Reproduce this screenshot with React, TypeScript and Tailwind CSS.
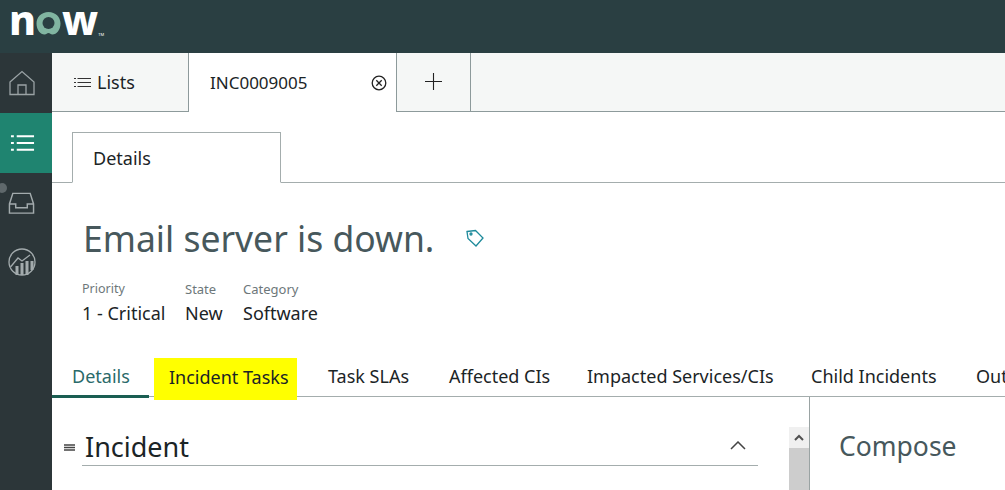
const sans = 'font-["Noto_Sans",sans-serif]';

function TopBar() {
  return (
    <header className="h-[53px] bg-[#2a3f42] flex items-start pl-[9px] shrink-0">
      <div className="flex items-center h-[46px] text-white font-extrabold text-[41px] leading-none">
        <span className="pb-[8px]">n</span>
        <svg width="27" height="25" viewBox="0 0 26 25" className="-ml-[1px]">
          <path
            d="M13 1C6 1 1 6 1 12.500 1 19 5 23.500 9 23.500c2 0 2.500-1.500 4-1.500s2 1.500 4 1.500c4 0 8-4.500 8-11C25 6 20 1 13 1z"
            fill="#81b5a1"
          />
          <circle cx="13" cy="12" r="6" fill="#2a3f42" />
        </svg>
        <span className="pb-[8px]">w</span>
        <span className="self-end mb-[9px] text-[4px] font-normal">TM</span>
      </div>
    </header>
  );
}

function Sidebar() {
  return (
    <aside className="w-[52px] shrink-0 bg-[#2c3639] relative flex flex-col">
      <div className="h-[60px] flex items-center justify-center pr-[8px]">
        <svg width="28" height="28" viewBox="0 0 28 28" fill="none" stroke="#9aa3a5" strokeWidth="1.300">
          <path d="M2 13 14 2.500 26 13v12.500H2z" />
          <path d="M10 25.500V16h8v9.500" />
        </svg>
      </div>
      <div className="h-[60px] bg-[#1f8470] flex items-center justify-center pr-[8px]">
        <svg width="25" height="20" viewBox="0 0 26 20" fill="none" stroke="#fff" strokeWidth="2">
          <path d="M1 3h3M7 3h18M1 10h3M7 10h18M1 17h3M7 17h18" />
        </svg>
      </div>
      <div className="h-[60px] flex items-center justify-center pr-[9px]">
        <svg width="27" height="24" viewBox="0 0 28 24" fill="none" stroke="#a3abad" strokeWidth="1.500" className="mt-[-1px]">
          <path d="M5 2h18l3.500 11v9.500h-25V13z" />
          <path d="M1.500 13H8v4h12v-4h6.500" />
        </svg>
      </div>
      <div className="h-[60px] flex items-center justify-center pr-[8px] -mt-[1px]">
        <svg width="28" height="28" viewBox="0 0 28 28" fill="none" stroke="#a3abad">
          <circle cx="14" cy="14" r="13" strokeWidth="1.300" />
          <path d="M2.500 19 10 10l4 3 8-6" strokeWidth="1.300" />
          <path d="M9 27v-9M14 27V15M19 27V13M24 22v-9" strokeWidth="3" />
        </svg>
      </div>
      <span className="absolute left-[-3px] top-[130px] w-[10px] h-[10px] rounded-full bg-[#5f686b]" />
    </aside>
  );
}

function TabStrip() {
  return (
    <div className="h-[59px] bg-[#f5f7f6] flex border-b border-[#8d9a9b] shrink-0 text-[#1b2426]">
      <div className="w-[137px] border-r border-[#8d9a9b] flex items-center pl-[22px] gap-[6px]">
        <svg width="17" height="11" viewBox="0 0 17 11" fill="none" stroke="#333" strokeWidth="1.200">
          <path d="M0 1.500h2M3.500 1.500H17M0 5.500h2M3.500 5.500H17M0 9.500h2M3.500 9.500H17" />
        </svg>
        <span className="text-[18px] leading-none">Lists</span>
      </div>
      <div className="w-[208px] bg-white -mb-[1px] flex items-center pl-[21px] pr-[9px] justify-between border-r border-[#8d9a9b]">
        <span className="text-[17px] leading-none">INC0009005</span>
        <svg width="16" height="16" viewBox="0 0 16 16" fill="none" stroke="#222" strokeWidth="1.300">
          <circle cx="8" cy="8" r="6.800" />
          <path d="M5.300 5.300l5.400 5.400M10.700 5.300l-5.400 5.400" />
        </svg>
      </div>
      <div className="w-[74px] border-r border-[#8d9a9b] flex items-center justify-center pb-[1px]">
        <svg width="17" height="17" viewBox="0 0 17 17" stroke="#222" strokeWidth="1.100">
          <path d="M8.500 0v17M0 8.500h17" />
        </svg>
      </div>
    </div>
  );
}

const subTabs = [
  { label: "Task SLAs", w: "w-[121px]" },
  { label: "Affected CIs", w: "w-[138px]" },
  { label: "Impacted Services/CIs", w: "w-[224px]" },
  { label: "Child Incidents", w: "w-[165px]" },
  { label: "Outages", w: "w-[80px]" },
];

export default function App() {
  return (
    <div className={`w-[1005px] h-[490px] overflow-hidden bg-white flex flex-col ${sans}`}>
      <TopBar />
      <div className="flex flex-1 min-h-0">
        <Sidebar />
        <main className="flex-1 min-w-0 flex flex-col">
          <TabStrip />
          <div className="h-[71px] pt-[20px] pl-[20px] border-b border-[#a4adad] shrink-0">
            <div className="w-[209px] h-[51px] border border-b-white border-[#a4adad] bg-white flex items-center pl-[20px] pt-[2px] text-[18px] text-[#1b2426]">
              Details
            </div>
          </div>
          <div className="flex items-center pl-[31px] pt-[30px] gap-[32px]">
            <h1 className="text-[35.500px] leading-[50px] text-[#47585c]">Email server is down.</h1>
            <svg width="18" height="18" viewBox="0 0 18 18" fill="none" stroke="#1d8a9b" strokeWidth="1.300">
              <path d="M1 2.500 9.500 1.500 17 9 10 17 2 9.500z" />
              <circle cx="5" cy="5" r="1" />
            </svg>
          </div>
          <div className="flex pl-[30px] mt-[17px]">
            <div className="w-[103px]">
              <div className="text-[12.500px] leading-[18px] text-[#6d777a]">Priority</div>
              <div className="text-[18px] leading-[24px] text-[#1b2426] mt-[3px]">1 - Critical</div>
            </div>
            <div className="w-[58px]">
              <div className="text-[13px] leading-[18px] text-[#6d777a]">State</div>
              <div className="text-[18px] leading-[24px] text-[#1b2426] mt-[3px]">New</div>
            </div>
            <div>
              <div className="text-[13px] leading-[18px] text-[#6d777a]">Category</div>
              <div className="text-[18px] leading-[24px] text-[#1b2426] mt-[3px]">Software</div>
            </div>
          </div>
          <div className="flex h-[39px] mt-[33px] border-b border-[#a4adad] shrink-0 text-[18px] text-[#1b2426] whitespace-nowrap">
            <div className="w-[97px] h-[40px] pl-[20px] flex items-center border-b-[3px] border-[#1a5e52] text-[#2a6a6a] shrink-0">
              Details
            </div>
            <div className="w-[5px] shrink-0" />
            <div className="w-[143px] h-[42px] shrink-0 flex items-center pl-[15px] pb-[4px] bg-[#ffff00]">
              Incident Tasks
            </div>
            <div className="w-[16px] shrink-0" />
            {subTabs.map((t) => (
              <div key={t.label} className={`${t.w} h-[38px] shrink-0 flex items-center pl-[15px] pb-[1px]`}>
                {t.label}
              </div>
            ))}
          </div>
          <div className="flex flex-1 min-h-0">
            <div className="w-[737px] shrink-0 flex pt-[31px] pl-[12px]">
              <svg width="11" height="7" viewBox="0 0 11 7" stroke="#444" strokeWidth="1.300" className="mt-[16px] mr-[7px]">
                <path d="M0 1h11M0 3.500h11M0 6h11" />
              </svg>
              <div className="w-[676px] h-[38px] border-b border-[#a4adad] flex items-start justify-between pr-[12px]">
                <span className="text-[27px] leading-[36px] text-[#1b2426] pl-[3px] pt-[1px]">Incident</span>
                <svg width="16" height="9" viewBox="0 0 16 9" fill="none" stroke="#444" strokeWidth="1.500" className="mt-[13px]">
                  <path d="M1 8l7-7 7 7" />
                </svg>
              </div>
            </div>
            <div className="w-[20px] shrink-0 mt-[30px] bg-[#cdcdcd]">
              <div className="h-[21px] bg-[#f0f0f0] flex items-center justify-center">
                <svg width="10" height="7" viewBox="0 0 10 7" fill="none" stroke="#505050" strokeWidth="2">
                  <path d="M1 6l4-4 4 4" />
                </svg>
              </div>
            </div>
            <div className="flex-1 border-l border-[#9aa3a3] pl-[29px] pt-[31px]">
              <span className="text-[26.500px] leading-[36px] text-[#47585c]">Compose</span>
            </div>
          </div>
        </main>
      </div>
    </div>
  );
}
